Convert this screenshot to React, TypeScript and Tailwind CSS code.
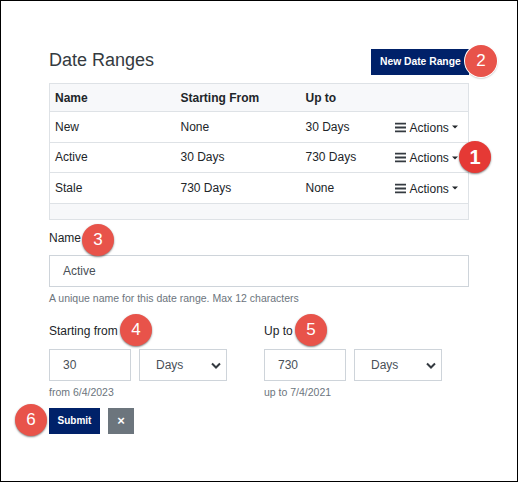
const font = { fontFamily: '"Liberation Sans", Arial, sans-serif' };

const rows = [
  { name: 'New', from: 'None', to: '30 Days' },
  { name: 'Active', from: '30 Days', to: '730 Days' },
  { name: 'Stale', from: '730 Days', to: 'None' },
];

// numbered callout circle laid over the screenshot
function Badge({ n, className }: { n: number; className: string }) {
  return (
    <span
      className={`absolute flex h-[32px] w-[32px] items-center justify-center rounded-full text-[17px] text-white shadow-[0_1px_2px_rgba(0,0,0,0.5)] ${className}`}
    >
      {n}
    </span>
  );
}

function MenuIcon() {
  return (
    <svg width="11" height="10" viewBox="0 0 11 10" className="shrink-0">
      <rect x="0" y="0" width="11" height="2" fill="#343a40" />
      <rect x="0" y="4" width="11" height="2" fill="#343a40" />
      <rect x="0" y="8" width="11" height="2" fill="#343a40" />
    </svg>
  );
}

function Actions() {
  return (
    <span className="flex translate-y-[0.5px] items-center pl-[5px] text-[12px] text-[#212529]">
      <MenuIcon />
      <span className="ml-[4px]">Actions</span>
      <span className="ml-[3px] h-0 w-0 border-x-[3px] border-t-[3px] border-x-transparent border-t-[#212529]" />
    </span>
  );
}

function Chevron() {
  return (
    <svg width="10" height="8" viewBox="0 0 10 8" className="absolute right-[5px] top-[12px]">
      <path d="M1 1.5 L5 5.5 L9 1.5" fill="none" stroke="#343a40" strokeWidth="2" />
    </svg>
  );
}

function NumberAndUnit({ value }: { value: string }) {
  return (
    <div className="flex gap-[8px]">
      <div className="flex h-[32px] w-[82px] items-center border border-[#ced4da] pl-[13px] text-[12px] text-[#495057]">
        {value}
      </div>
      <div className="relative flex h-[32px] w-[88px] items-center border border-[#ced4da] pl-[16px] text-[12px] text-[#495057]">
        Days
        <Chevron />
      </div>
    </div>
  );
}

export default function App() {
  return (
    <div
      style={font}
      className="relative h-[482px] w-[518px] overflow-hidden border border-black bg-white px-[48px] pt-[48px] text-[12px] text-[#212529]"
    >
      {/* Header */}
      <div className="flex h-[26px] w-[420px] items-start justify-between">
        <h2 className="pt-[1px] text-[18px] leading-[20px] text-[#343a40]">Date Ranges</h2>
        <button className="h-[26px] w-[98px] bg-[#002169] pl-[9px] text-left text-[10.3px] font-bold text-white">
          New Date Range
        </button>
      </div>

      {/* Table */}
      <table className="mt-[8px] w-[420px] table-fixed border-collapse border border-[#dee2e6]">
        <thead>
          <tr className="h-[28px] border-b border-[#dee2e6] bg-[#f7f8fa] text-left font-bold">
            <th className="w-[126px] pl-[5px]">Name</th>
            <th className="w-[125px] pl-[5px]">Starting From</th>
            <th className="w-[89px] pl-[5px]">Up to</th>
            <th />
          </tr>
        </thead>
        <tbody>
          {rows.map((r) => (
            <tr key={r.name} className="h-[30.5px] border-b border-[#dee2e6]">
              <td className="pl-[5px]">{r.name}</td>
              <td className="pl-[5px]">{r.from}</td>
              <td className="pl-[5px]">{r.to}</td>
              <td>
                <Actions />
              </td>
            </tr>
          ))}
          <tr className="h-[16px] bg-[#f7f8fa]">
            <td colSpan={4} />
          </tr>
        </tbody>
      </table>

      {/* Form */}
      <div className="mt-[11px] leading-[14px]">Name</div>
      <div className="mt-[10px] flex h-[32px] w-[420px] items-center border border-[#ced4da] pl-[13px] text-[12px] text-[#495057]">
        Active
      </div>
      <div className="mt-[5px] text-[10.5px] leading-[12px] text-[#6c757d]">
        A unique name for this date range. Max 12 characters
      </div>

      <div className="mt-[20px] flex gap-[37px]">
        <div className="w-[178px]">
          <div className="leading-[14px]">Starting from</div>
          <div className="mt-[11px]">
            <NumberAndUnit value="30" />
          </div>
          <div className="mt-[5px] text-[10.5px] leading-[12px] text-[#6c757d]">from 6/4/2023</div>
        </div>
        <div className="w-[178px]">
          <div className="leading-[14px]">Up to</div>
          <div className="mt-[11px]">
            <NumberAndUnit value="730" />
          </div>
          <div className="mt-[5px] text-[10.5px] leading-[12px] text-[#6c757d]">up to 7/4/2021</div>
        </div>
      </div>

      <div className="mt-[10px] flex gap-[8px]">
        <button className="h-[26px] w-[51px] bg-[#002169] text-[10px] font-bold text-white">Submit</button>
        <button className="h-[26px] w-[26px] bg-[#6c757d] text-[13px] font-bold text-white">×</button>
      </div>

      <Badge n={1} className="left-[458px] top-[140px] bg-[#e53935] text-[20px] font-bold" />
      <Badge n={2} className="left-[464px] top-[44px] bg-[#e8534a] ring-1 ring-white" />
      <Badge n={3} className="left-[81px] top-[223px] bg-[#e8534a]" />
      <Badge n={4} className="left-[119px] top-[313px] bg-[#e8534a]" />
      <Badge n={5} className="left-[294px] top-[313px] bg-[#e8534a]" />
      <Badge n={6} className="left-[14px] top-[403px] bg-[#e8534a]" />
    </div>
  );
}
